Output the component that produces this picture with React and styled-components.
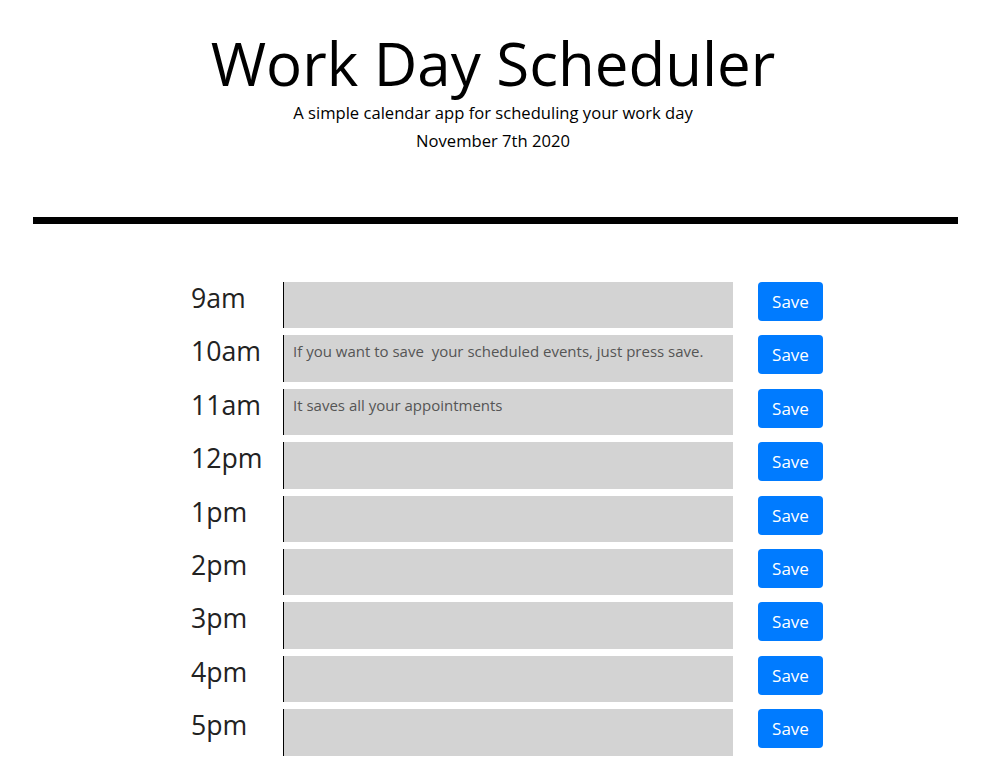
import React from 'react'
import styled, { createGlobalStyle } from 'styled-components'

const GlobalStyle = createGlobalStyle`
  html, body {
    margin: 0;
    padding: 0;
    background: #fff;
    font-family: "Open Sans", "Liberation Sans", sans-serif;
    color: #212529;
  }
`

const Header = styled.header`
  text-align: center;
  padding: 27px 0 0;
  margin-bottom: 62px;
`

const Title = styled.h1`
  font-size: 60px;
  font-weight: 400;
  line-height: 1.2;
  margin: 0;
  color: #000;
`

const Lead = styled.p`
  font-size: 16.6px;
  line-height: 28px;
  margin: 0;
  color: #000;
`

const Divider = styled.hr`
  border: 0;
  height: 7px;
  background: #000;
  margin: 0 28px 0 33px;
`

const Schedule = styled.main`
  width: 632px;
  margin: 58px auto 0;
  padding-left: 28px;
  display: flex;
  flex-direction: column;
  gap: 7px;
`

const Row = styled.div`
  display: flex;
  align-items: flex-start;
  height: 46.4px;
`

const Hour = styled.div`
  width: 92px;
  flex-shrink: 0;
  font-size: 26.7px;
  line-height: 32px;
  color: #222;
`

const Notes = styled.textarea`
  width: 450px;
  height: 100%;
  box-sizing: border-box;
  background: #d3d3d3;
  border: 0;
  border-left: 1px solid #000;
  padding: 6px 9px;
  font-family: inherit;
  font-size: 15px;
  color: #555;
  resize: none;
  outline: none;
`

const SaveButton = styled.button`
  margin-left: 25px;
  width: 65px;
  height: 39px;
  border: 0;
  border-radius: 4px;
  background: #007bff;
  color: #fff;
  font-family: inherit;
  font-size: 17px;
  cursor: pointer;
`

const hours = [
  { label: '9am', text: '' },
  { label: '10am', text: 'If you want to save  your scheduled events, just press save.' },
  { label: '11am', text: 'It saves all your appointments' },
  { label: '12pm', text: '' },
  { label: '1pm', text: '' },
  { label: '2pm', text: '' },
  { label: '3pm', text: '' },
  { label: '4pm', text: '' },
  { label: '5pm', text: '' },
]

export default function App() {
  return (
    <>
      <GlobalStyle />
      <Header>
        <Title>Work Day Scheduler</Title>
        <Lead>A simple calendar app for scheduling your work day</Lead>
        <Lead>November 7th 2020</Lead>
      </Header>
      <Divider />
      <Schedule>
        {hours.map((h) => (
          <Row key={h.label}>
            <Hour>{h.label}</Hour>
            <Notes defaultValue={h.text} />
            <SaveButton>Save</SaveButton>
          </Row>
        ))}
      </Schedule>
    </>
  )
}
